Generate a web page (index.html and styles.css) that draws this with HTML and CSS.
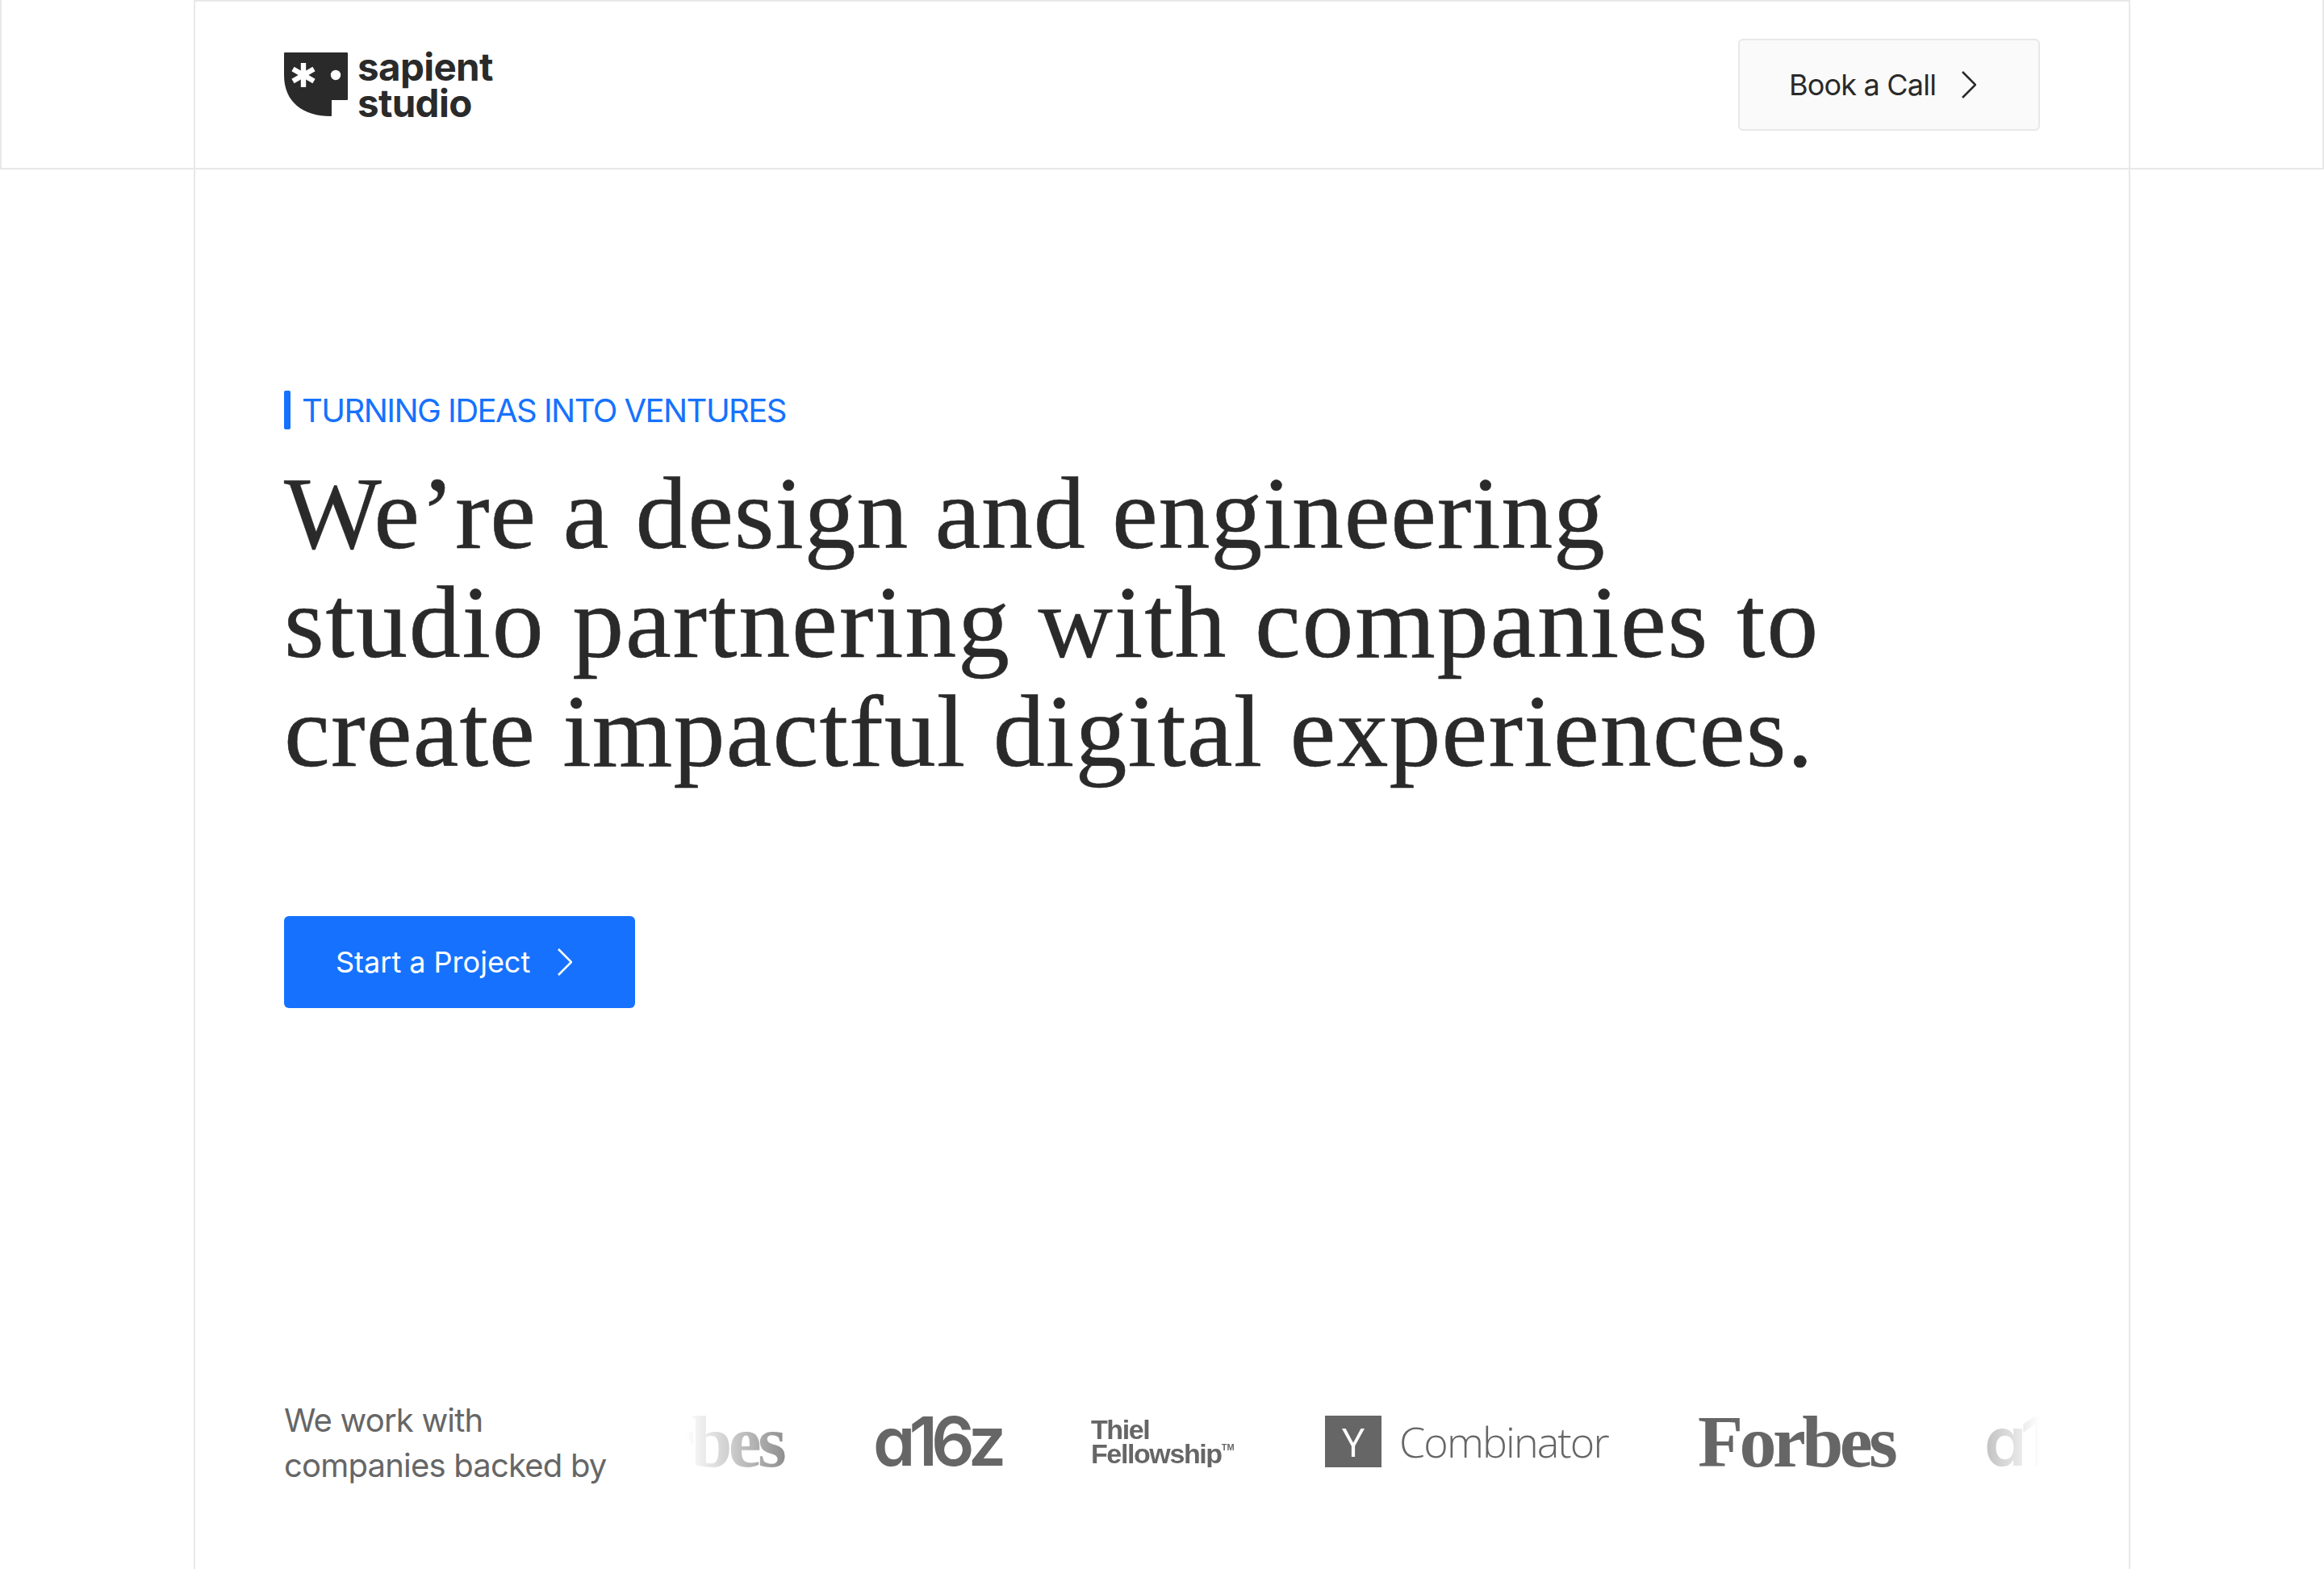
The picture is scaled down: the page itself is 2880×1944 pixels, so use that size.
FILE: index.html
```html
<!DOCTYPE html>
<html lang="en">
<head>
<meta charset="utf-8">
<title>Sapient Studio</title>
<link rel="stylesheet" href="styles.css">
</head>
<body>
<div class="page">
  <header class="band">
    <div class="bar">
      <a class="brand" href="#">
        <svg class="mark" viewBox="0 0 79 79" width="79" height="79" aria-hidden="true">
          <path d="M1 0H78a1 1 0 0 1 1 1V58a1 1 0 0 1-1 1H59V78a1 1 0 0 1-1 1C24 79 0 62 0 28V1a1 1 0 0 1 1-1Z" fill="#2a2a2a"/>
          <g stroke="#fff" stroke-width="6.4" fill="none">
            <path d="M24 13V43"/>
            <path d="M11 20.5L37 35.5"/>
            <path d="M11 35.5L37 20.5"/>
          </g>
          <circle cx="64" cy="28" r="6.2" fill="#fff"/>
        </svg>
        <span class="wordmark">sapient<br>studio</span>
      </a>
      <a class="btn btn-light" href="#">
        <span>Book a Call</span>
        <svg class="chev" viewBox="0 0 18 34" width="18" height="34" aria-hidden="true"><path d="M1 1L17 17L1 33" fill="none" stroke="currentColor" stroke-width="2.6"/></svg>
      </a>
    </div>
  </header>
  <main class="main">
    <div class="eyebrow"><span class="tick"></span><span>TURNING IDEAS INTO VENTURES</span></div>
    <h1 class="headline"><span class="line line-a">We’re a design and engineering</span><span class="line line-b">studio partnering with companies to</span><span class="line line-c">create impactful digital experiences.</span></h1>
    <a class="btn btn-primary" href="#">
      <span>Start a Project</span>
      <svg class="chev" viewBox="0 0 18 34" width="18" height="34" aria-hidden="true"><path d="M1 1L17 17L1 33" fill="none" stroke="currentColor" stroke-width="2.6"/></svg>
    </a>
    <section class="backers">
      <p class="backers-label">We work with<br>companies backed by</p>
      <div class="strip">
        <div class="track">
          <span class="logo forbes">Forbes</span>
          <span class="logo a16z">a16z</span>
          <span class="logo thiel"><span>Thiel</span><span>Fellowship<sup class="tm">TM</sup></span></span>
          <span class="logo yc"><span class="yc-box">Y</span><span class="yc-name">Combinator</span></span>
          <span class="logo forbes">Forbes</span>
          <span class="logo a16z">a16z</span>
        </div>
      </div>
    </section>
  </main>
</div>
</body>
</html>
```
FILE: styles.css
```css
* { box-sizing: border-box; }
html, body { margin: 0; padding: 0; background: #fff; }
body { font-family: "Inter", "Liberation Sans", sans-serif; color: #2a2a2a; }
a { text-decoration: none; color: inherit; }

.page { width: 2880px; height: 1944px; overflow: hidden; }

.band {
  height: 210px;
  border-left: 2px solid #e8e8e8;
  border-right: 2px solid #e8e8e8;
  border-bottom: 2px solid #e8e8e8;
}
.bar {
  width: 2400px;
  height: 208px;
  margin: 0 auto;
  padding: 0 110px;
  display: flex;
  align-items: center;
  justify-content: space-between;
  border: 2px solid #e8e8e8;
  border-bottom: 0;
}
.brand { display: flex; align-items: center; gap: 12px; }
.mark { display: block; flex: none; margin-bottom: 1px; }
.wordmark {
  font-size: 47.5px;
  line-height: 45px;
  font-weight: 700;
  letter-spacing: -0.65px;
  color: #2a2a2a;
}

.btn {
  display: inline-flex;
  align-items: center;
  height: 114px;
  font-size: 36px;
  border-radius: 6px;
}
.chev { display: block; flex: none; }
.btn-light {
  width: 374px;
  padding-left: 61px;
  gap: 32px;
  background: #fafafa;
  border: 2px solid #e8e8e8;
  color: #2a2a2a;
  letter-spacing: -0.8px;
}
.btn-primary {
  width: 435px;
  padding-left: 64px;
  gap: 34px;
  background: #1672fe;
  color: #fff;
  margin-top: 161px;
  letter-spacing: 0;
}

.main {
  width: 2400px;
  height: 1734px;
  margin: 0 auto;
  padding: 274px 110px 0;
  border-left: 2px solid #e8e8e8;
  border-right: 2px solid #e8e8e8;
}
.eyebrow {
  display: flex;
  align-items: center;
  gap: 14px;
  height: 48px;
  font-size: 40px;
  letter-spacing: -1.55px;
  color: #1672fe;
}
.tick { width: 8px; height: 48px; border-radius: 2px; background: #1672fe; flex: none; }
.headline {
  margin: 37px 0 0;
  font-family: "Liberation Serif", "Times New Roman", serif;
  font-weight: 400;
  font-size: 128px;
  line-height: 135px;
  white-space: nowrap;
  color: #2a2a2a;
  -webkit-text-stroke: 0.5px #2a2a2a;
}
.line { display: block; }
.line-a { letter-spacing: 0.67px; }
.line-b { letter-spacing: 1.76px; }
.line-c { letter-spacing: 1.1px; }

.backers {
  display: flex;
  align-items: flex-start;
  margin-top: 483px;
}
.backers-label {
  margin: 0;
  width: 498px;
  flex: none;
  font-size: 40px;
  line-height: 56px;
  letter-spacing: -0.8px;
  color: #666;
  white-space: nowrap;
}
.strip {
  width: 1678px;
  flex: none;
  margin-top: 22px;
  overflow: hidden;
  -webkit-mask-image: linear-gradient(90deg, transparent, #000 10%, #000 90%, transparent);
  mask-image: linear-gradient(90deg, transparent, #000 10%, #000 90%, transparent);
}
.track {
  display: flex;
  align-items: center;
  gap: 112px;
  height: 64px;
  margin-left: -123px;
  color: #666;
  white-space: nowrap;
}
.logo { display: block; flex: none; }
.forbes {
  width: 243px;
  font-family: "Liberation Serif", serif;
  font-weight: 700;
  font-size: 92px;
  line-height: 64px;
  letter-spacing: -4.6px;
}
.a16z {
  width: 158px;
  font-size: 84px;
  line-height: 64px;
  font-weight: 600;
  letter-spacing: -8px;
  font-feature-settings: "cv11" 1;
}
.thiel {
  width: 178px;
  display: flex;
  flex-direction: column;
  font-family: "Liberation Sans", sans-serif;
  font-weight: 700;
  font-size: 34px;
  line-height: 30px;
  letter-spacing: -1.4px;
}
.tm { font-size: 11px; line-height: 0; letter-spacing: 0; vertical-align: 16px; }
.yc { width: 350px; display: flex; align-items: center; gap: 22px; }
.yc-box {
  width: 70px;
  height: 64px;
  flex: none;
  display: flex;
  align-items: center;
  justify-content: center;
  background: #666;
  color: #fff;
  font-family: "Open Sans", sans-serif;
  font-size: 50px;
}
.yc-name {
  font-family: "Open Sans", sans-serif;
  font-weight: 300;
  font-size: 52px;
  line-height: 64px;
  letter-spacing: -1.9px;
}
```
